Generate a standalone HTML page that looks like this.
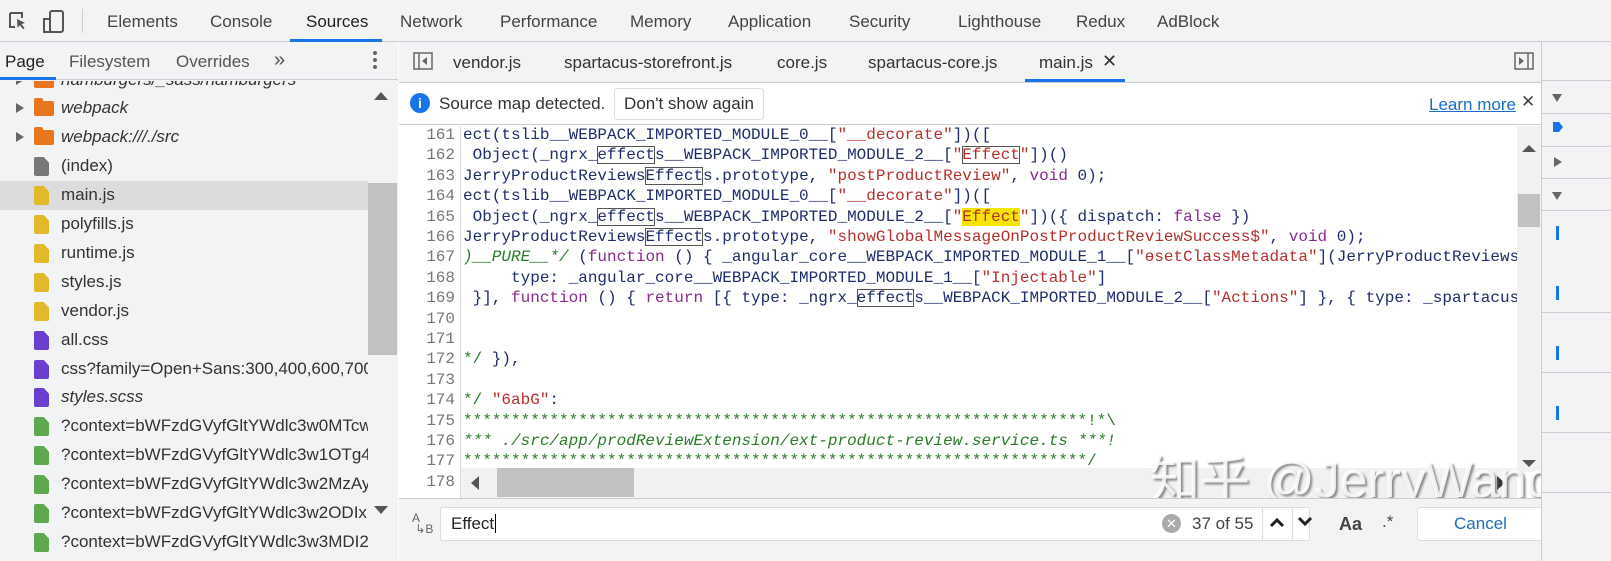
<!DOCTYPE html>
<html><head><meta charset="utf-8"><style>
*{margin:0;padding:0;box-sizing:border-box}
body{width:1611px;height:561px;overflow:hidden;background:#fff;font-family:"Liberation Sans",sans-serif;position:relative;color:#333}
.a{position:absolute}
.top{left:0;top:0;width:1611px;height:42px;background:#f1f3f4;border-bottom:1px solid #cbcdd1}
.top span{position:absolute;top:12px;font-size:17px;color:#444}
.side{left:0;top:42px;width:398px;height:519px;background:#f1f3f4;border-right:1px solid #cbcdd1}
.stabs{left:0;top:42px;width:398px;height:38px;border-bottom:1px solid #cbcdd1;background:#f1f3f4}
.stabs span{position:absolute;top:10px;font-size:17px;color:#555}
.row{position:absolute;left:0;width:368px;height:29px;font-size:17px;color:#333}
.row .t{position:absolute;left:61px;top:4px;white-space:nowrap}
.fi{position:absolute;left:34px;top:5px;width:15px;height:19px;clip-path:polygon(0 0,65% 0,100% 30%,100% 100%,0 100%);border-radius:2px}
.fo{position:absolute;left:34px;top:7px;width:20px;height:15px;background:#e8761f;border-radius:2px}
.fo:before{content:"";position:absolute;left:0;top:-3px;width:9px;height:4px;background:#e8761f;border-radius:2px 2px 0 0}
.tri{position:absolute;left:16px;top:9px;width:0;height:0;border-left:8px solid #666;border-top:5px solid transparent;border-bottom:5px solid transparent}
.etabs{left:399px;top:42px;width:1142px;height:41px;background:#f1f3f4;border-bottom:1px solid #cbcdd1}
.etabs span{position:absolute;top:11px;font-size:17px;color:#333}
.info{left:399px;top:83px;width:1142px;height:42px;background:#fff;border-bottom:1px solid #cbcdd1}
.code{left:399px;top:126px;width:1118px;height:372px;overflow:hidden;background:#fff}
.ln{position:absolute;left:0;width:56px;text-align:right;color:#777;font-family:"Liberation Mono",monospace;font-size:16px}
.cl{position:absolute;left:64px;white-space:pre;font-family:"Liberation Mono",monospace;font-size:16px;letter-spacing:0;color:#1f2d6b}
.s{color:#b5302a}.k{color:#8a2a90}.c{color:#2a7a2a}
.b{outline:1px solid #555;outline-offset:-1px}
.h{background:#f5e500}
.rp{left:1541px;top:42px;width:70px;height:519px;background:#f1f3f4;border-left:1px solid #cbcdd1}
</style></head><body>
<div class="a top">
 <svg class="a" style="left:8px;top:11px" width="20" height="22" viewBox="0 0 20 22"><path d="M2 2h12v5M2 2v14h5" fill="none" stroke="#555" stroke-width="2"/><path d="M9 8l8 4-3.5 1 3 4-1.5 1.2-3-4-2.5 2.5z" fill="#555"/></svg>
 <svg class="a" style="left:42px;top:10px" width="24" height="24" viewBox="0 0 24 24"><rect x="8" y="1" width="13" height="21" rx="2" fill="none" stroke="#555" stroke-width="2"/><rect x="2" y="9" width="6" height="13" fill="none" stroke="#555" stroke-width="2"/></svg>
 <div class="a" style="left:82px;top:9px;width:1px;height:24px;background:#ccc"></div>
 <span style="left:107px">Elements</span><span style="left:210px">Console</span><span style="left:306px;color:#222">Sources</span>
 <div class="a" style="left:290px;top:39px;width:92px;height:3px;background:#1a73e8"></div>
 <span style="left:400px">Network</span><span style="left:500px">Performance</span><span style="left:630px">Memory</span><span style="left:728px">Application</span><span style="left:849px">Security</span><span style="left:958px">Lighthouse</span><span style="left:1076px">Redux</span><span style="left:1157px">AdBlock</span>
</div>
<div class="a side"></div>
<div class="a stabs"><span style="left:5px;color:#222">Page</span><span style="left:69px">Filesystem</span><span style="left:176px">Overrides</span><span style="left:274px;top:7px;font-size:20px">»</span>
<div class="a" style="left:373px;top:9px;width:4px;height:4px;border-radius:2px;background:#666;box-shadow:0 7px #666,0 14px #666"></div>
<div class="a" style="left:0;top:35px;width:56px;height:3px;background:#1a73e8"></div></div>
<div class="a" style="left:0;top:81px;width:398px;height:480px;overflow:hidden">
<div class="row" style="top:-15px"><i class="tri"></i><i class="fo"></i><span class="t" style="font-style:italic">hamburgers/_sass/hamburgers</span></div>
<div class="row" style="top:13px"><i class="tri"></i><i class="fo"></i><span class="t" style="font-style:italic">webpack</span></div>
<div class="row" style="top:42px"><i class="tri"></i><i class="fo"></i><span class="t" style="font-style:italic">webpack:///./src</span></div>
<div class="row" style="top:71px"><i class="fi" style="background:#777"></i><span class="t">(index)</span></div>
<div class="row" style="top:100px;background:#dcdcdc"><i class="fi" style="background:#e2b92a"></i><span class="t">main.js</span></div>
<div class="row" style="top:129px"><i class="fi" style="background:#e2b92a"></i><span class="t">polyfills.js</span></div>
<div class="row" style="top:158px"><i class="fi" style="background:#e2b92a"></i><span class="t">runtime.js</span></div>
<div class="row" style="top:187px"><i class="fi" style="background:#e2b92a"></i><span class="t">styles.js</span></div>
<div class="row" style="top:216px"><i class="fi" style="background:#e2b92a"></i><span class="t">vendor.js</span></div>
<div class="row" style="top:245px"><i class="fi" style="background:#6a3fcf"></i><span class="t">all.css</span></div>
<div class="row" style="top:274px"><i class="fi" style="background:#6a3fcf"></i><span class="t">css?family=Open+Sans:300,400,600,700</span></div>
<div class="row" style="top:302px"><i class="fi" style="background:#6a3fcf"></i><span class="t" style="font-style:italic">styles.scss</span></div>
<div class="row" style="top:331px"><i class="fi" style="background:#5fa84f"></i><span class="t">?context=bWFzdGVyfGltYWdlc3w0MTcw</span></div>
<div class="row" style="top:360px"><i class="fi" style="background:#5fa84f"></i><span class="t">?context=bWFzdGVyfGltYWdlc3w1OTg4</span></div>
<div class="row" style="top:389px"><i class="fi" style="background:#5fa84f"></i><span class="t">?context=bWFzdGVyfGltYWdlc3w2MzAy</span></div>
<div class="row" style="top:418px"><i class="fi" style="background:#5fa84f"></i><span class="t">?context=bWFzdGVyfGltYWdlc3w2ODIx</span></div>
<div class="row" style="top:447px"><i class="fi" style="background:#5fa84f"></i><span class="t">?context=bWFzdGVyfGltYWdlc3w3MDI2</span></div>
</div>
<div class="a" style="left:368px;top:81px;width:30px;height:480px;background:#f1f3f4"></div>
<div class="a" style="left:368px;top:183px;width:29px;height:172px;background:#c1c1c1"></div>
<div class="a" style="left:374px;top:92px;border-bottom:8px solid #555;border-left:7px solid transparent;border-right:7px solid transparent"></div>
<div class="a" style="left:374px;top:506px;border-top:8px solid #555;border-left:7px solid transparent;border-right:7px solid transparent"></div>

<div class="a etabs">
 <svg class="a" style="left:14px;top:10px" width="20" height="18"><rect x="1" y="1" width="18" height="16" fill="none" stroke="#666" stroke-width="1.5"/><line x1="6" y1="1" x2="6" y2="17" stroke="#666" stroke-width="1.5"/><path d="M14 5v8l-5-4z" fill="#666"/></svg>
 <span style="left:54px">vendor.js</span><span style="left:165px">spartacus-storefront.js</span><span style="left:378px">core.js</span><span style="left:469px">spartacus-core.js</span><span style="left:640px">main.js</span><span style="left:703px;font-size:18px;top:9px">✕</span>
 <div class="a" style="left:626px;top:37px;width:100px;height:3px;background:#1a73e8"></div>
 <svg class="a" style="left:1115px;top:10px" width="20" height="18"><rect x="1" y="1" width="18" height="16" fill="none" stroke="#666" stroke-width="1.5"/><line x1="14" y1="1" x2="14" y2="17" stroke="#666" stroke-width="1.5"/><path d="M5 5v8l5-4z" fill="#666"/></svg>
</div>
<div class="a info">
 <div class="a" style="left:11px;top:10px;width:20px;height:20px;border-radius:10px;background:#1a73e8;color:#fff;font-size:14px;font-weight:bold;text-align:center;line-height:20px">i</div>
 <span class="a" style="left:40px;top:11px;font-size:17px;color:#333">Source map detected.</span>
 <div class="a" style="left:215px;top:5px;width:150px;height:32px;border:1px solid #ddd;border-radius:4px;font-size:17px;color:#333;text-align:center;line-height:30px">Don't show again</div>
 <span class="a" style="left:1030px;top:12px;font-size:17px;color:#1a6fc4;text-decoration:underline">Learn more</span>
 <span class="a" style="left:1122px;top:9px;font-size:17px;color:#444">✕</span>
</div>
<div class="a code">
<div class="ln" style="top:0">161</div><div class="cl" style="top:0">ect(tslib__WEBPACK_IMPORTED_MODULE_0__[<span class="s">"__decorate"</span>])([</div>
<div class="ln" style="top:20.4px">162</div><div class="cl" style="top:20.4px"> Object(_ngrx_<span class="b">effect</span>s__WEBPACK_IMPORTED_MODULE_2__[<span class="s">"<span class="b">Effect</span>"</span>])()</div>
<div class="ln" style="top:40.8px">163</div><div class="cl" style="top:40.8px">JerryProductReviews<span class="b">Effect</span>s.prototype, <span class="s">"postProductReview"</span>, <span class="k">void</span> 0);</div>
<div class="ln" style="top:61.2px">164</div><div class="cl" style="top:61.2px">ect(tslib__WEBPACK_IMPORTED_MODULE_0__[<span class="s">"__decorate"</span>])([</div>
<div class="ln" style="top:81.6px">165</div><div class="cl" style="top:81.6px"> Object(_ngrx_<span class="b">effect</span>s__WEBPACK_IMPORTED_MODULE_2__[<span class="s">"<span class="h">Effect</span>"</span>])({ dispatch: <span class="k">false</span> })</div>
<div class="ln" style="top:102px">166</div><div class="cl" style="top:102px">JerryProductReviews<span class="b">Effect</span>s.prototype, <span class="s">"showGlobalMessageOnPostProductReviewSuccess$"</span>, <span class="k">void</span> 0);</div>
<div class="ln" style="top:122.4px">167</div><div class="cl" style="top:122.4px"><span class="c" style="font-style:italic">)__PURE__*/</span> (<span class="k">function</span> () { _angular_core__WEBPACK_IMPORTED_MODULE_1__[<span class="s">"ɵsetClassMetadata"</span>](JerryProductReviews<span class="b">Ef</span></div>
<div class="ln" style="top:142.8px">168</div><div class="cl" style="top:142.8px">     type: _angular_core__WEBPACK_IMPORTED_MODULE_1__[<span class="s">"Injectable"</span>]</div>
<div class="ln" style="top:163.2px">169</div><div class="cl" style="top:163.2px"> }], <span class="k">function</span> () { <span class="k">return</span> [{ type: _ngrx_<span class="b">effect</span>s__WEBPACK_IMPORTED_MODULE_2__[<span class="s">"Actions"</span>] }, { type: _spartacus_</div>
<div class="ln" style="top:183.6px">170</div>
<div class="ln" style="top:204px">171</div>
<div class="ln" style="top:224.4px">172</div><div class="cl" style="top:224.4px"><span class="c">*/</span> }),</div>
<div class="ln" style="top:244.8px">173</div>
<div class="ln" style="top:265.2px">174</div><div class="cl" style="top:265.2px"><span class="c">*/</span> <span class="s">"6abG"</span>:</div>
<div class="ln" style="top:285.6px">175</div><div class="cl c" style="top:285.6px">*****************************************************************!*\</div>
<div class="ln" style="top:306px">176</div><div class="cl c" style="top:306px;font-style:italic">*** ./src/app/prodReviewExtension/ext-product-review.service.ts ***!</div>
<div class="ln" style="top:326.4px">177</div><div class="cl c" style="top:326.4px">*****************************************************************/</div>
<div class="ln" style="top:346.8px">178</div>
<div class="a" style="left:61px;top:0;width:1px;height:372px;background:#ddd"></div>
<div class="a" style="left:62px;top:342px;width:1056px;height:30px;background:#f1f1f1"></div>
<div class="a" style="left:98px;top:342px;width:137px;height:29px;background:#c1c1c1"></div>
<div class="a" style="left:72px;top:350px;border-right:8px solid #555;border-top:7px solid transparent;border-bottom:7px solid transparent"></div>
<div class="a" style="left:1098px;top:350px;border-left:8px solid #333;border-top:7px solid transparent;border-bottom:7px solid transparent"></div>
</div>
<div class="a" style="left:1517px;top:126px;width:24px;height:346px;background:#f1f1f1"></div>
<div class="a" style="left:1518px;top:194px;width:22px;height:33px;background:#c1c1c1"></div>
<div class="a" style="left:1522px;top:145px;border-bottom:7px solid #555;border-left:7px solid transparent;border-right:7px solid transparent"></div>
<div class="a" style="left:1522px;top:460px;border-top:7px solid #555;border-left:7px solid transparent;border-right:7px solid transparent"></div>
<div class="a" style="left:1150px;top:440px;font-size:50px;color:rgba(255,255,255,.85);text-shadow:2px 2px 2px #888;font-family:'Liberation Sans','Noto Sans CJK SC',sans-serif;white-space:nowrap">知乎 @JerryWang</div>
<div class="a" style="left:399px;top:498px;width:1142px;height:63px;background:#f1f3f4;border-top:1px solid #cbcdd1"></div>
<div class="a" style="left:412px;top:513px;font-size:12px;color:#666;line-height:11px">A<br>&nbsp;↳B</div>
<div class="a" style="left:440px;top:507px;width:870px;height:34px;background:#fff;border:1px solid #ddd;border-radius:3px"></div>
<span class="a" style="left:451px;top:514px;font-size:17px;color:#222">Effect<span style="border-left:1px solid #000;margin-left:1px"></span></span>
<div class="a" style="left:1162px;top:514px;width:19px;height:19px;border-radius:10px;background:#aaa;color:#fff;font-size:13px;text-align:center;line-height:19px">✕</div>
<span class="a" style="left:1192px;top:514px;font-size:17px;color:#444">37 of 55</span>
<div class="a" style="left:1262px;top:507px;width:1px;height:34px;background:#ddd"></div>
<div class="a" style="left:1292px;top:507px;width:1px;height:34px;background:#ddd"></div>
<svg class="a" style="left:1268px;top:516px" width="18" height="14"><path d="M3 10l6-6 6 6" fill="none" stroke="#222" stroke-width="3"/></svg>
<svg class="a" style="left:1296px;top:514px" width="18" height="14"><path d="M3 4l6 6 6-6" fill="none" stroke="#222" stroke-width="3"/></svg>
<span class="a" style="left:1339px;top:514px;font-size:18px;font-weight:bold;color:#444">Aa</span>
<span class="a" style="left:1382px;top:512px;font-size:17px;color:#444">.*</span>
<div class="a" style="left:1417px;top:507px;width:127px;height:34px;background:#fff;border:1px solid #ddd;border-radius:4px;text-align:center;line-height:32px;font-size:17px;color:#1a6fc4">Cancel</div>
<div class="a rp">
 <div class="a" style="left:0;top:38px;width:70px;height:1px;background:#cbcdd1"></div>
 <div class="a" style="left:0;top:71px;width:70px;height:1px;background:#cbcdd1"></div>
 <div class="a" style="left:0;top:104px;width:70px;height:1px;background:#cbcdd1"></div>
 <div class="a" style="left:0;top:136px;width:70px;height:1px;background:#cbcdd1"></div>
 <div class="a" style="left:0;top:168px;width:70px;height:1px;background:#cbcdd1"></div>
 <div class="a" style="left:0;top:270px;width:70px;height:1px;background:#cbcdd1"></div>
 <div class="a" style="left:0;top:330px;width:70px;height:1px;background:#cbcdd1"></div>
 <div class="a" style="left:0;top:390px;width:70px;height:1px;background:#cbcdd1"></div>
 <div class="a" style="left:0;top:450px;width:70px;height:1px;background:#cbcdd1"></div>
 <div class="a" style="left:10px;top:52px;border-top:8px solid #666;border-left:5px solid transparent;border-right:5px solid transparent"></div>
 <div class="a" style="left:11px;top:80px;width:10px;height:10px;background:#1a73e8;clip-path:polygon(0 0,60% 0,100% 50%,60% 100%,0 100%)"></div>
 <div class="a" style="left:12px;top:115px;border-left:8px solid #666;border-top:5px solid transparent;border-bottom:5px solid transparent"></div>
 <div class="a" style="left:10px;top:150px;border-top:8px solid #666;border-left:5px solid transparent;border-right:5px solid transparent"></div>
 <div class="a" style="left:14px;top:184px;width:3px;height:14px;background:#1a73e8"></div>
 <div class="a" style="left:14px;top:244px;width:3px;height:14px;background:#1a73e8"></div>
 <div class="a" style="left:14px;top:304px;width:3px;height:14px;background:#1a73e8"></div>
 <div class="a" style="left:14px;top:364px;width:3px;height:14px;background:#1a73e8"></div>
</div>
</body></html>
